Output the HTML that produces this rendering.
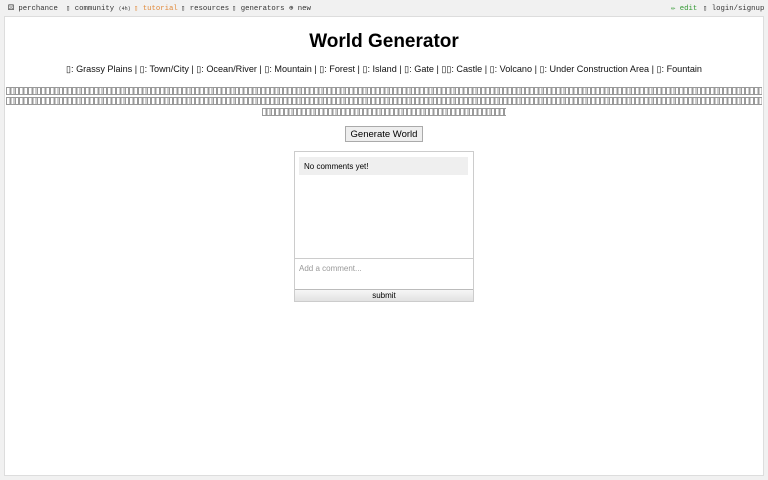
<!DOCTYPE html>
<html><head><meta charset="utf-8"><style>
body{margin:0;width:768px;height:480px;background:#f1f1f1;font-family:"Liberation Sans",sans-serif;position:relative;overflow:hidden}
.nav{position:absolute;top:0;left:0;right:0;height:16px;font-family:"Liberation Mono",monospace;font-size:7.3px;color:#333;line-height:18px}
.nav span{position:absolute;top:0;white-space:nowrap}
.main{position:absolute;left:4px;top:16px;width:758px;height:458px;background:#fff;border:1px solid #ddd}
h1{position:absolute;top:31px;left:0;width:768px;text-align:center;font-size:19px;margin:0;font-weight:bold;color:#000}
.leg{position:absolute;top:64px;left:0;width:768px;text-align:center;font-size:9.1px;color:#111;white-space:nowrap}
.tofu{position:absolute;height:6px;border-top:1px solid #999;border-bottom:1px solid #999;background:repeating-linear-gradient(90deg,#999 0 1px,transparent 1px 3.3px,#999 3.3px 4.3px,transparent 4.3px 4.4px)}
.btn{position:absolute;left:345px;top:126px;width:76px;height:14px;border:1px solid #aaa;background:#eee;font-size:9.5px;text-align:center;line-height:15px;color:#000}
.cbox{position:absolute;left:294px;top:151px;width:178px;height:149px;border:1px solid #ccc;background:#fff}
.nc{position:absolute;left:4px;top:5px;width:169px;height:18px;background:#efefef;font-size:8px;line-height:19px;text-indent:5px}
.inp{position:absolute;left:0;top:106px;width:178px;height:30px;border-top:1px solid #ccc;font-size:8px;color:#999;text-indent:4px;line-height:20px}
.sub{position:absolute;left:0;top:137px;width:178px;height:11px;border-top:1px solid #bbb;background:linear-gradient(#f6f6f6,#e2e2e2);font-size:8px;text-align:center;line-height:12px}
</style></head><body>
<div class="nav">
<span style="left:8px"><span style="position:static;font-size:10px">⚄</span> perchance</span>
<span style="left:66px">▯ community <small style="font-size:5px">(4h)</small></span>
<span style="left:134px;color:#e08a3c">▯ tutorial</span>
<span style="left:181px">▯ resources</span>
<span style="left:232px">▯ generators</span>
<span style="left:289px">⊕ new</span>
<span style="left:671px;color:#393">✏ edit</span>
<span style="left:703px">▯ login/signup</span>
</div>
<div class="main"></div>
<h1>World Generator</h1>
<div class="leg">▯: Grassy Plains | ▯: Town/City | ▯: Ocean/River | ▯: Mountain | ▯: Forest | ▯: Island | ▯: Gate | ▯▯: Castle | ▯: Volcano | ▯: Under Construction Area | ▯: Fountain</div>
<div class="tofu" style="left:6px;top:87px;width:756px"></div>
<div class="tofu" style="left:6px;top:97px;width:756px"></div>
<div class="tofu" style="left:262px;top:108px;width:244px"></div>
<div class="btn">Generate World</div>
<div class="cbox">
<div class="nc">No comments yet!</div>
<div class="inp">Add a comment...</div>
<div class="sub">submit</div>
</div>
</body></html>
